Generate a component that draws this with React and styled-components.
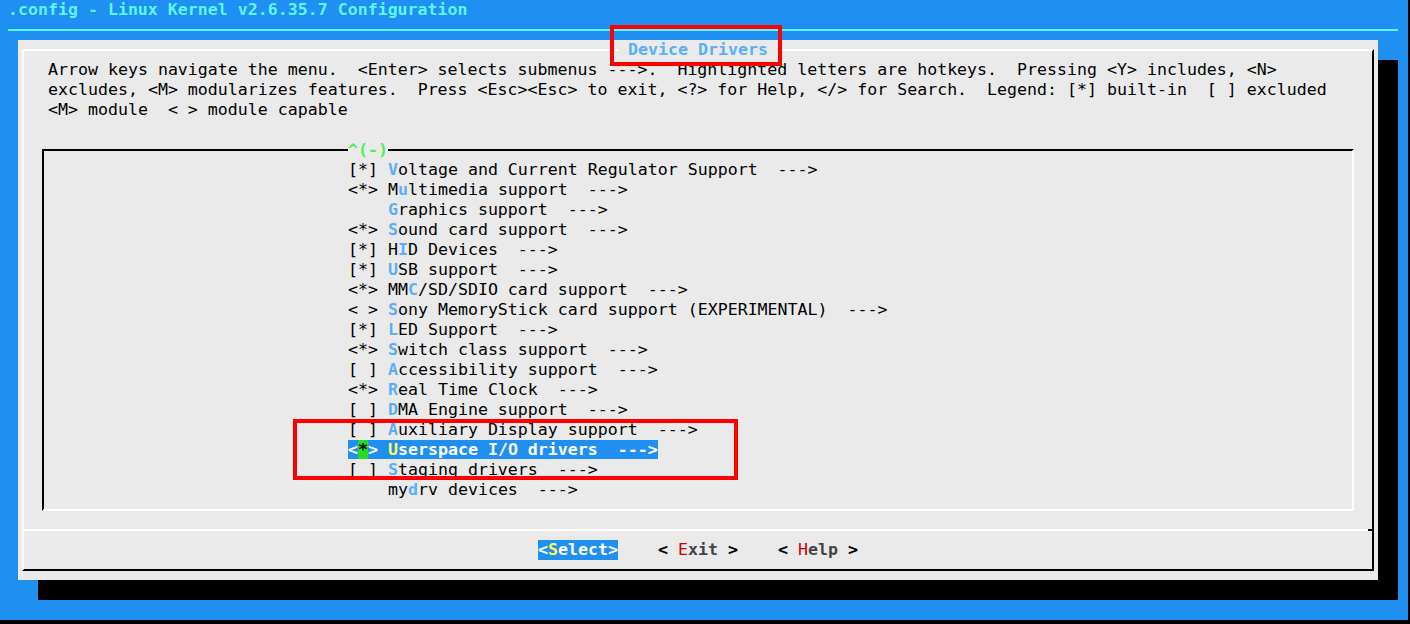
import React from 'react';
import styled, { createGlobalStyle } from 'styled-components';

const BLUE = '#1f8ff2';
const GREY = '#eaeaea';
const HOT = '#5aaefa';

const GlobalStyle = createGlobalStyle`
body {
  margin: 0;
  background: #000;
}
`

const Screen = styled.div`
position: relative;
width: 1408px;
height: 620px;
box-sizing: border-box;
padding: 0 8px;
background: ${BLUE};
font-family: "DejaVu Sans Mono", "Liberation Mono", monospace;
font-size: 16.6px;
line-height: 20px;
white-space: pre;
overflow: hidden;
`

const TitleBar = styled.div`
height: 20px;
color: #5cf6ff;
font-weight: bold;
`

const Rule = styled.div`
height: 2px;
margin: 9px 2px 9px 0;
background: #5cf6ff;
`

const Dialog = styled.div`
display: flex;
width: 1360px;
height: 540px;
margin-left: 10px;
box-sizing: border-box;
padding: 9px 4px;
background: ${GREY};
box-shadow: 20px 20px 0 #000;
color: #000;
`

const Frame = styled.div`
position: relative;
flex: 1;
display: flex;
flex-direction: column;
border: 2px solid;
border-color: #fff #000 #000 #fff;
`

const DialogTitle = styled.div`
position: absolute;
top: -11px;
left: 0;
right: 0;
text-align: center;
span {
  background: ${GREY};
  color: ${HOT};
  font-weight: bold;
}
`

const Help = styled.div`
margin-top: 9px;
padding-left: 24px;
`

const MenuBox = styled.div`
position: relative;
margin: 29px 18px 0;
padding: 9px 0 9px 304px;
border: 2px solid;
border-color: #000 #fff #fff #000;
`

const ScrollMark = styled.div`
position: absolute;
top: -11px;
left: 304px;
background: ${GREY};
color: #4ef04e;
font-weight: bold;
`

const Item = styled.div`
height: 20px;
`

const Line = styled.span`
background: ${p => (p.$selected ? BLUE : 'transparent')};
color: ${p => (p.$selected ? '#fff' : '#000')};
font-weight: ${p => (p.$selected ? 'bold' : 'normal')};
`

const Hot = styled.span`
color: ${p => (p.$selected ? '#ffff55' : HOT)};
font-weight: bold;
`

const Star = styled.span`
background: #22dd22;
color: #000;
`

const Separator = styled.div`
height: 2px;
margin-top: 18px;
background: linear-gradient(to right, #fff calc(100% - 4px), #000 0);
`

const Buttons = styled.div`
display: flex;
justify-content: center;
gap: 40px;
margin-top: 9px;
height: 20px;
`

const Button = styled.span`
background: ${p => (p.$selected ? BLUE : 'transparent')};
color: ${p => (p.$selected ? '#fff' : '#000')};
font-weight: bold;
`

const Key = styled.span`
color: ${p => (p.$selected ? '#ffff55' : '#cc0000')};
font-weight: ${p => (p.$selected ? 'bold' : 'normal')};
`

const Rest = styled.span`
color: ${p => (p.$selected ? '#fff' : '#444')};
`

const Mark = styled.div`
position: absolute;
box-sizing: border-box;
border: 4px solid #ff0000;
`

const items = [
  ['[*] ', '', 'V', 'oltage and Current Regulator Support'],
  ['<*> ', 'M', 'u', 'ltimedia support'],
  ['    ', '', 'G', 'raphics support'],
  ['<*> ', '', 'S', 'ound card support'],
  ['[*] ', 'H', 'I', 'D Devices'],
  ['[*] ', '', 'U', 'SB support'],
  ['<*> ', 'MM', 'C', '/SD/SDIO card support'],
  ['< > ', '', 'S', 'ony MemoryStick card support (EXPERIMENTAL)'],
  ['[*] ', '', 'L', 'ED Support'],
  ['<*> ', '', 'S', 'witch class support'],
  ['[ ] ', '', 'A', 'ccessibility support'],
  ['<*> ', '', 'R', 'eal Time Clock'],
  ['[ ] ', '', 'D', 'MA Engine support'],
  ['[ ] ', '', 'A', 'uxiliary Display support'],
  ['<*> ', '', 'U', 'serspace I/O drivers', true],
  ['[ ] ', '', 'S', 'taging drivers'],
  ['    ', 'my', 'd', 'rv devices'],
]

const MenuItem = ({ box, before, hot, after, selected }) => (
  <Item>
    <Line $selected={selected}>
      {selected ? <>{'<'}<Star>*</Star>{'> '}</> : box}
      {before}
      <Hot $selected={selected}>{hot}</Hot>
      {after}
      {'  --->'}
    </Line>
  </Item>
)

const App = () => {
  return (
    <Screen>
      <GlobalStyle />
      <TitleBar>.config - Linux Kernel v2.6.35.7 Configuration</TitleBar>
      <Rule />
      <Dialog>
        <Frame>
          <DialogTitle><span> Device Drivers </span></DialogTitle>
          <Help>
            {'Arrow keys navigate the menu.  <Enter> selects submenus --->.  Highlighted letters are hotkeys.  Pressing <Y> includes, <N>\n'}
            {'excludes, <M> modularizes features.  Press <Esc><Esc> to exit, <?> for Help, </> for Search.  Legend: [*] built-in  [ ] excluded\n'}
            {'<M> module  < > module capable'}
          </Help>
          <MenuBox>
            <ScrollMark>^(-)</ScrollMark>
            {items.map(([box, before, hot, after, selected], i) => (
              <MenuItem key={i} box={box} before={before} hot={hot} after={after} selected={selected} />
            ))}
          </MenuBox>
          <Separator />
          <Buttons>
            <Button $selected>{'<'}<Key $selected>S</Key>{'elect>'}</Button>
            <Button>{'< '}<Key>E</Key><Rest>xit</Rest>{' >'}</Button>
            <Button>{'< '}<Key>H</Key><Rest>elp</Rest>{' >'}</Button>
          </Buttons>
        </Frame>
      </Dialog>
      <Mark style={{ left: 610, top: 25, width: 172, height: 41 }} />
      <Mark style={{ left: 293, top: 419, width: 445, height: 61 }} />
    </Screen>
  )
}

export default App
